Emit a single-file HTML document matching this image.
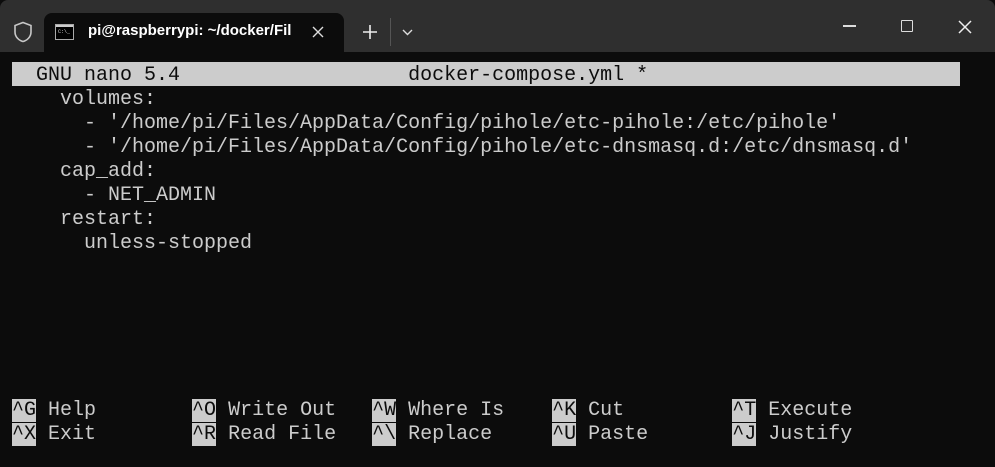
<!DOCTYPE html>
<html><head><style>
html,body{margin:0;padding:0;background:#0c0c0c;}
body{width:995px;height:467px;overflow:hidden;position:relative;font-family:"Liberation Sans",sans-serif;}
.top{position:absolute;left:0;top:0;width:995px;height:52px;background:#2f2f2f;border-radius:8px 8px 0 0;}
.tab{position:absolute;left:44px;top:13px;width:300px;height:39px;background:#0c0c0c;border-radius:8px 8px 0 0;}
.tab .t{position:absolute;left:44px;top:9px;color:#fff;font-size:15px;font-weight:bold;white-space:nowrap;width:204px;overflow:hidden;}
.row{position:absolute;left:12px;height:24px;line-height:24px;font-family:"Liberation Mono",monospace;font-size:20px;color:#cccccc;white-space:pre;}
.hl{background:#cccccc;color:#0c0c0c;}
</style></head><body>
<div class="top">
 <svg style="position:absolute;left:13px;top:21px" width="20" height="22" viewBox="0 0 20 22"><path d="M10 1.5 L18 4.5 V11 C18 16 14 19.5 10 20.5 C6 19.5 2 16 2 11 V4.5 Z" fill="none" stroke="#c8c8c8" stroke-width="1.6"/></svg>
 <div class="tab">
  <svg style="position:absolute;left:11px;top:11px" width="19" height="16"><rect x="0.5" y="0.5" width="18" height="15" fill="#000" stroke="#aaa"/><rect x="1" y="1" width="17" height="2" fill="#ccc"/><text x="3" y="9" font-size="5" fill="#ddd" font-family="Liberation Mono">C:\_</text></svg>
  <div class="t">pi@raspberrypi: ~/docker/Files</div>
  <svg style="position:absolute;left:268px;top:13px" width="12" height="12"><path d="M1 1L11 11M11 1L1 11" stroke="#ddd" stroke-width="1.4"/></svg>
 </div>
 <svg style="position:absolute;left:363px;top:25px" width="14" height="14"><path d="M7 0V14M0 7H14" stroke="#eee" stroke-width="1.6"/></svg>
 <div style="position:absolute;left:390px;top:18px;width:1px;height:28px;background:#555"></div>
 <svg style="position:absolute;left:402px;top:29px" width="11" height="7"><path d="M1 1L5.5 5.5L10 1" stroke="#ddd" stroke-width="1.4" fill="none"/></svg>
 <div style="position:absolute;left:843px;top:25px;width:13px;height:1.5px;background:#ddd"></div>
 <div style="position:absolute;left:901px;top:20px;width:10px;height:10px;border:1.5px solid #ddd;border-radius:1px"></div>
 <svg style="position:absolute;left:958px;top:20px" width="14" height="14"><path d="M1 1L13 13M13 1L1 13" stroke="#eee" stroke-width="1.5"/></svg>
</div>
<div class="row hl" style="top:62px;width:948px;line-height:28px;overflow:hidden">  GNU nano 5.4                   docker-compose.yml *</div>
<div class="row" style="top:88px">    volumes:</div>
<div class="row" style="top:112px">      - '/home/pi/Files/AppData/Config/pihole/etc-pihole:/etc/pihole'</div>
<div class="row" style="top:136px">      - '/home/pi/Files/AppData/Config/pihole/etc-dnsmasq.d:/etc/dnsmasq.d'</div>
<div class="row" style="top:160px">    cap_add:</div>
<div class="row" style="top:184px">      - NET_ADMIN</div>
<div class="row" style="top:208px">    restart:</div>
<div class="row" style="top:232px">      unless-stopped</div>
<div class="row" style="top:399px"><span class="hl">^G</span> Help        <span class="hl">^O</span> Write Out   <span class="hl">^W</span> Where Is    <span class="hl">^K</span> Cut         <span class="hl">^T</span> Execute</div>
<div class="row" style="top:423px"><span class="hl">^X</span> Exit        <span class="hl">^R</span> Read File   <span class="hl">^\</span> Replace     <span class="hl">^U</span> Paste       <span class="hl">^J</span> Justify</div>
</body></html>
